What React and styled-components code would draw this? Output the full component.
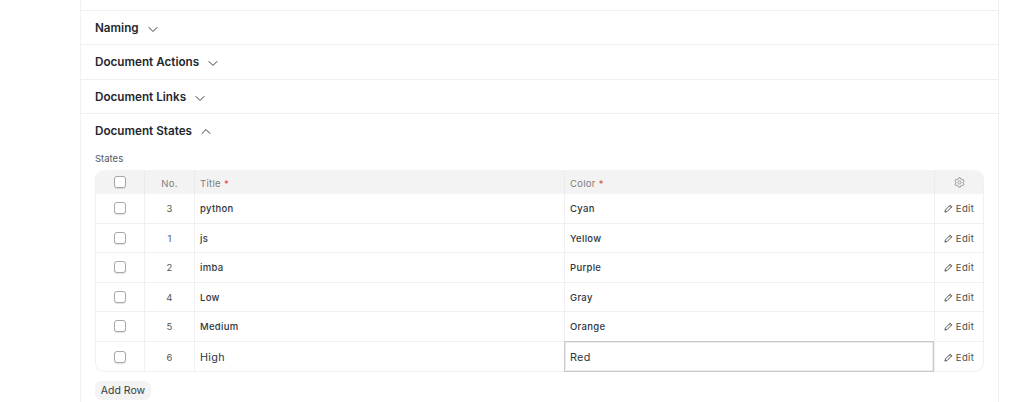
import React from 'react';
import styled, { createGlobalStyle } from 'styled-components';

const GlobalStyle = createGlobalStyle`
  html, body {
    margin: 0;
    padding: 0;
    background: #fff;
    overflow: hidden;
  }
  body {
    font-family: Inter, "Noto Sans", sans-serif;
    color: #1f272e;
  }
`;

const Page = styled.div`
  width: 1035px;
  height: 402px;
  overflow: hidden;
  padding-left: 80px;
  box-sizing: border-box;
`;

const Card = styled.div`
  width: 919px;
  height: 402px;
  box-sizing: border-box;
  border-left: 1px solid #f1f1f1;
  border-right: 1px solid #f1f1f1;
  padding-top: 10px;
`;

const Section = styled.div`
  border-top: 1px solid #efefef;
  height: ${(p) => p.$height}px;
  box-sizing: border-box;
  padding: 0 14px;
`;

const SectionHead = styled.div`
  display: flex;
  align-items: center;
  height: 33px;
  gap: 8px;
  font-size: 11.7px;
  font-weight: 600;
  color: #1f272e;
`;

const Chevron = styled.svg`
  width: 12px;
  height: 12px;
  margin-top: 2px;
  fill: none;
  stroke: #333c44;
  stroke-width: 1;
  stroke-linecap: round;
  stroke-linejoin: round;
`;

const FieldLabel = styled.div`
  font-size: 9.5px;
  line-height: 14px;
  color: #525a62;
  margin: 5px 0 4px;
`;

const Table = styled.div`
  width: 889px;
  box-sizing: border-box;
  border: 1px solid #f0f0f0;
  border-top: 0;
  border-radius: 9px;
`;

const Row = styled.div`
  display: grid;
  grid-template-columns: 48px 50px 370px 370px 1fr;
  height: ${(p) => (p.$head ? 24 : 29.55)}px;
  box-sizing: border-box;
  background: ${(p) => (p.$head ? '#f3f3f3' : 'transparent')};
  border-radius: ${(p) => (p.$head ? '9px 9px 0 0' : '0')};
  border-bottom: ${(p) => (p.$last || p.$head ? '0' : '1px solid #f0f0f0')};
`;

const Cell = styled.div`
  position: relative;
  display: flex;
  align-items: center;
  justify-content: ${(p) => (p.$center ? 'center' : 'flex-start')};
  padding: ${(p) => (p.$center ? '0' : '1px 5px 0')};
  border-left: ${(p) => (p.$first ? '0' : `1px solid ${p.$head ? '#ebebeb' : '#f0f0f0'}`)};
  font-size: ${(p) => (p.$big ? '10.8px' : '9.5px')};
  font-weight: ${(p) => (p.$big ? 400 : 500)};
  color: #2f363d;
  letter-spacing: 0.3px;
  min-width: 0;
`;

const HeadText = styled.span`
  padding-top: 2px;
  font-size: 9.5px;
  font-weight: 400;
  color: #7c7c7c;
  letter-spacing: 0.3px;
`;

const Required = styled.span`
  color: #e24c4c;
  margin-left: 3px;
`;

const NoText = styled.span`
  padding-top: 1px;
  font-size: 9.5px;
  font-weight: 400;
  color: #525252;
`;

const Box = styled.span`
  width: 10px;
  height: 10px;
  border: 1px solid #a8a8a8;
  border-radius: 3px;
  background: #fff;
  box-shadow: 0 1px 1px rgba(0, 0, 0, 0.12);
`;

const FocusBox = styled.div`
  position: absolute;
  inset: -1px 0 -1px -1px;
  border: 1px solid #c9c9c9;
  box-shadow: inset 0 0 0 0.5px #dcdcdc;
  pointer-events: none;
`;

const EditLink = styled.span`
  display: flex;
  align-items: center;
  gap: 3px;
  padding-top: 1px;
  font-size: 9.5px;
  font-weight: 400;
  color: #4c4c4c;
  letter-spacing: 0.35px;
`;

const AddRow = styled.button`
  display: block;
  margin-top: 9px;
  height: 19px;
  width: 56px;
  padding: 0;
  border: 0;
  border-radius: 6px;
  background: #f3f3f3;
  font-family: inherit;
  font-size: 10.5px;
  color: #333c44;
`;

const Pencil = () => (
  <svg width="9" height="9" viewBox="0 0 12 12" fill="none" stroke="#444" strokeWidth="1.2" strokeLinejoin="round">
    <path d="M1.2 10.8 L2 7.8 L8.3 1.5 L10.5 3.7 L4.2 10 Z" />
    <path d="M7.2 2.6 L9.4 4.8" />
  </svg>
);

const Gear = () => (
  <svg width="11" height="11" viewBox="0 0 16 16" fill="none" stroke="#7c7c7c" strokeWidth="1">
    <path d="M6.6 1.2h2.8l.4 2 1.5.9 2-.7 1.4 2.4-1.6 1.4v1.6l1.6 1.4-1.4 2.4-2-.7-1.5.9-.4 2H6.6l-.4-2-1.5-.9-2 .7-1.4-2.4 1.6-1.4V7.2L1.3 5.8l1.4-2.4 2 .7 1.5-.9z" strokeLinejoin="round" />
    <circle cx="8" cy="8" r="2.2" />
  </svg>
);

const sections = [
  { title: 'Naming', height: 34 },
  { title: 'Document Actions', height: 35 },
  { title: 'Document Links', height: 34 },
];

const rows = [
  { no: 3, title: 'python', color: 'Cyan' },
  { no: 1, title: 'js', color: 'Yellow' },
  { no: 2, title: 'imba', color: 'Purple' },
  { no: 4, title: 'Low', color: 'Gray' },
  { no: 5, title: 'Medium', color: 'Orange' },
  { no: 6, title: 'High', color: 'Red', editing: true },
];

const App = () => {
  return (
    <Page>
      <GlobalStyle />
      <Card>
        {sections.map((s) => (
          <Section key={s.title} $height={s.height}>
            <SectionHead>
              {s.title}
              <Chevron viewBox="0 0 12 12">
                <path d="M2 4.5 L6 8.5 L10 4.5" />
              </Chevron>
            </SectionHead>
          </Section>
        ))}
        <Section $height={300}>
          <SectionHead>
            Document States
            <Chevron viewBox="0 0 12 12">
              <path d="M2 7.5 L6 3.5 L10 7.5" />
            </Chevron>
          </SectionHead>
          <FieldLabel>States</FieldLabel>
          <Table>
            <Row $head>
              <Cell $first $center $head><Box /></Cell>
              <Cell $center $head><HeadText>No.</HeadText></Cell>
              <Cell $head><HeadText>Title<Required>*</Required></HeadText></Cell>
              <Cell $head><HeadText>Color<Required>*</Required></HeadText></Cell>
              <Cell $center $head><Gear /></Cell>
            </Row>
            {rows.map((r, i) => (
              <Row key={r.no} $last={i === rows.length - 1}>
                <Cell $first $center><Box /></Cell>
                <Cell $center><NoText>{r.no}</NoText></Cell>
                <Cell $big={r.editing}>{r.title}</Cell>
                <Cell $big={r.editing}>
                  {r.color}
                  {r.editing && <FocusBox />}
                </Cell>
                <Cell $center>
                  <EditLink><Pencil />Edit</EditLink>
                </Cell>
              </Row>
            ))}
          </Table>
          <AddRow>Add Row</AddRow>
        </Section>
      </Card>
    </Page>
  );
};

export default App;
